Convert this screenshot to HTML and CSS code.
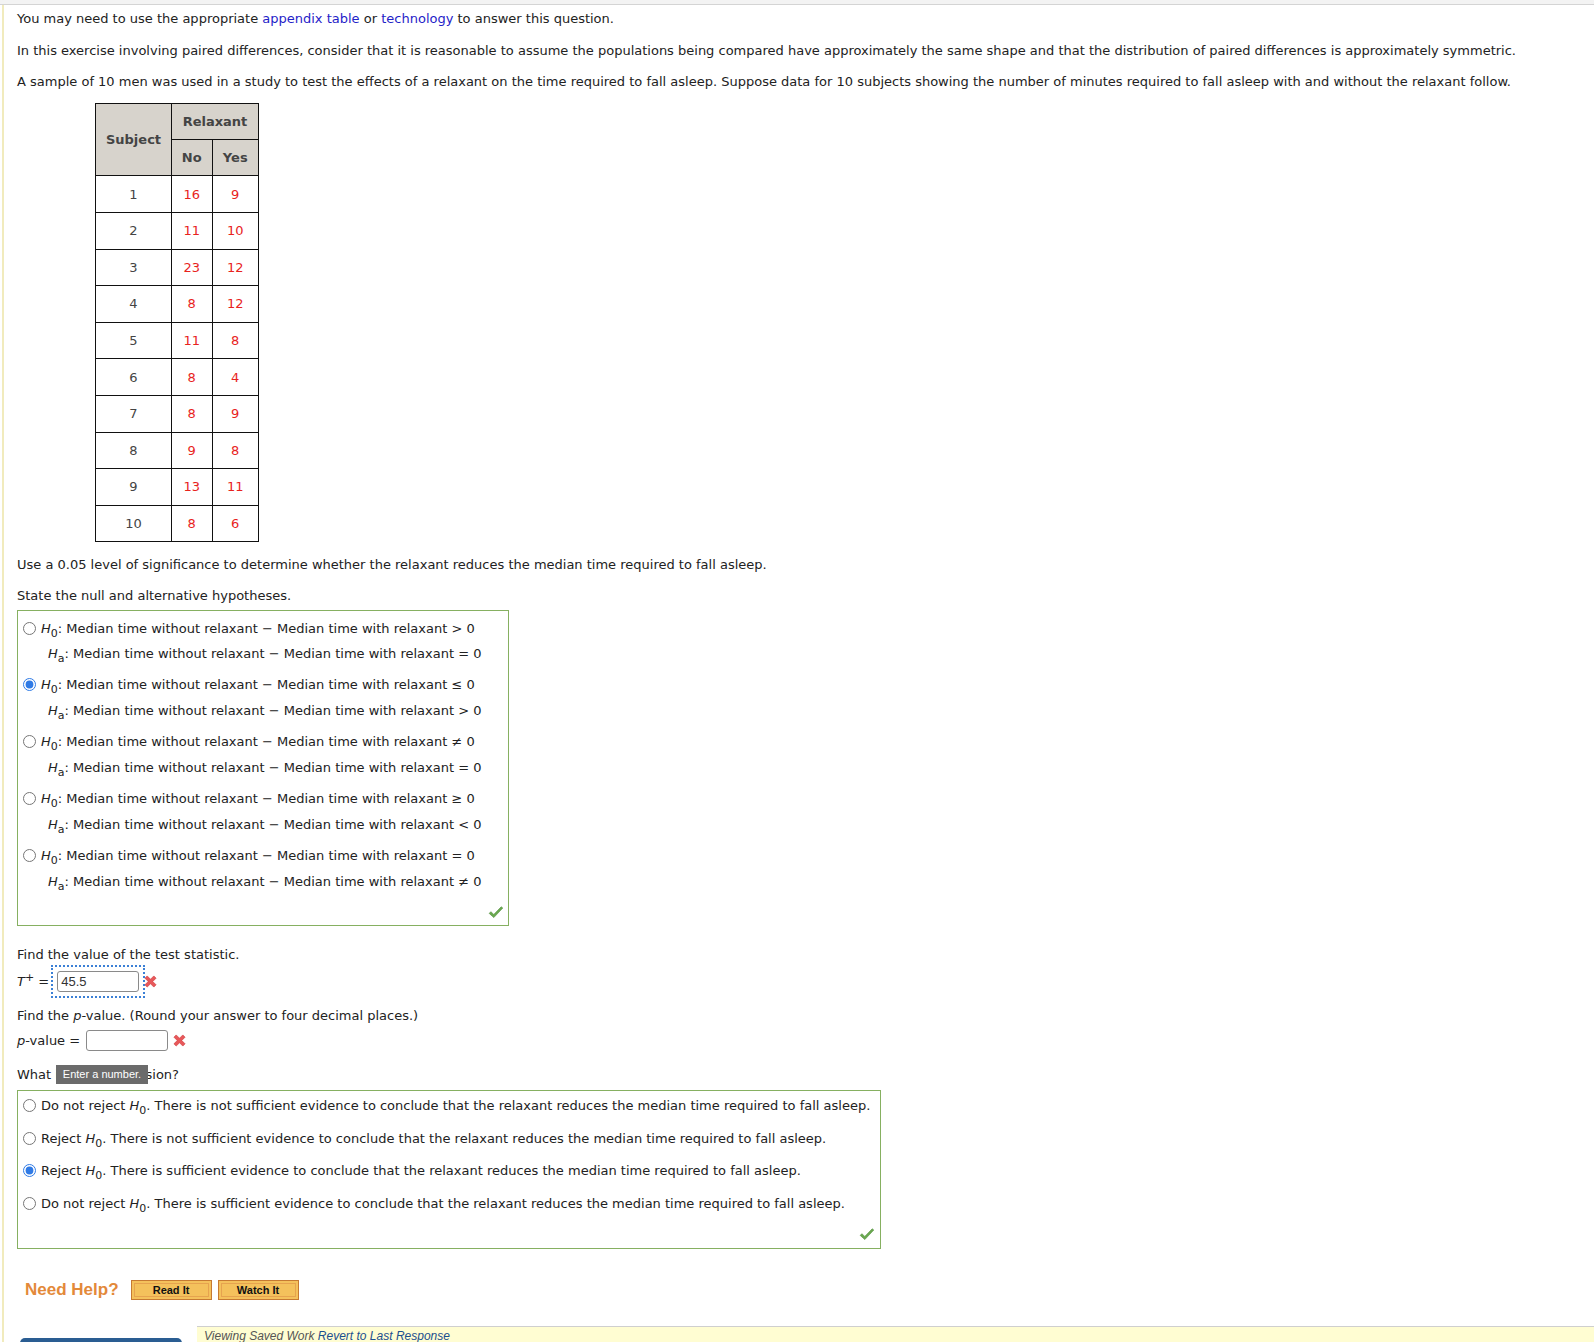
FILE: index.html
```html
<!DOCTYPE html>
<html lang="en">
<head>
<meta charset="utf-8">
<title>Paired differences - relaxant</title>
<link rel="stylesheet" href="styles.css">
</head>
<body>
<div class="topstrip"></div>
<div class="page">
  <div class="content">
    <p class="para">You may need to use the appropriate <a class="link" href="#">appendix table</a> or <a class="link" href="#">technology</a> to answer this question.</p>
    <p class="para">In this exercise involving paired differences, consider that it is reasonable to assume the populations being compared have approximately the same shape and that the distribution of paired differences is approximately symmetric.</p>
    <p class="para para-last">A sample of 10 men was used in a study to test the effects of a relaxant on the time required to fall asleep. Suppose data for 10 subjects showing the number of minutes required to fall asleep with and without the relaxant follow.</p>

    <table class="data">
      <thead>
        <tr><th rowspan="2" class="col-subj">Subject</th><th colspan="2" class="col-group">Relaxant</th></tr>
        <tr><th class="col-no">No</th><th class="col-yes">Yes</th></tr>
      </thead>
      <tbody>
        <tr><td>1</td><td class="val">16</td><td class="val">9</td></tr>
        <tr><td>2</td><td class="val">11</td><td class="val">10</td></tr>
        <tr><td>3</td><td class="val">23</td><td class="val">12</td></tr>
        <tr><td>4</td><td class="val">8</td><td class="val">12</td></tr>
        <tr><td>5</td><td class="val">11</td><td class="val">8</td></tr>
        <tr><td>6</td><td class="val">8</td><td class="val">4</td></tr>
        <tr><td>7</td><td class="val">8</td><td class="val">9</td></tr>
        <tr><td>8</td><td class="val">9</td><td class="val">8</td></tr>
        <tr><td>9</td><td class="val">13</td><td class="val">11</td></tr>
        <tr><td>10</td><td class="val">8</td><td class="val">6</td></tr>
      </tbody>
    </table>

    <p class="para q1">Use a 0.05 level of significance to determine whether the relaxant reduces the median time required to fall asleep.</p>
    <p class="para q2">State the null and alternative hypotheses.</p>

    <div class="answer-box box-hyp">
      <div class="hyp-opt">
        <div class="hyp-line"><input class="radio" type="radio" name="hyp"><span><i>H</i><sub>0</sub>: Median time without relaxant &minus; Median time with relaxant &gt; 0</span></div>
        <div class="hyp-line hyp-alt"><span><i>H</i><sub>a</sub>: Median time without relaxant &minus; Median time with relaxant = 0</span></div>
      </div>
      <div class="hyp-opt">
        <div class="hyp-line"><input class="radio" type="radio" name="hyp" checked><span><i>H</i><sub>0</sub>: Median time without relaxant &minus; Median time with relaxant &le; 0</span></div>
        <div class="hyp-line hyp-alt"><span><i>H</i><sub>a</sub>: Median time without relaxant &minus; Median time with relaxant &gt; 0</span></div>
      </div>
      <div class="hyp-opt">
        <div class="hyp-line"><input class="radio" type="radio" name="hyp"><span><i>H</i><sub>0</sub>: Median time without relaxant &minus; Median time with relaxant &ne; 0</span></div>
        <div class="hyp-line hyp-alt"><span><i>H</i><sub>a</sub>: Median time without relaxant &minus; Median time with relaxant = 0</span></div>
      </div>
      <div class="hyp-opt">
        <div class="hyp-line"><input class="radio" type="radio" name="hyp"><span><i>H</i><sub>0</sub>: Median time without relaxant &minus; Median time with relaxant &ge; 0</span></div>
        <div class="hyp-line hyp-alt"><span><i>H</i><sub>a</sub>: Median time without relaxant &minus; Median time with relaxant &lt; 0</span></div>
      </div>
      <div class="hyp-opt">
        <div class="hyp-line"><input class="radio" type="radio" name="hyp"><span><i>H</i><sub>0</sub>: Median time without relaxant &minus; Median time with relaxant = 0</span></div>
        <div class="hyp-line hyp-alt"><span><i>H</i><sub>a</sub>: Median time without relaxant &minus; Median time with relaxant &ne; 0</span></div>
      </div>
      <div class="status">
        <svg class="check" width="16" height="13" viewBox="0 0 16 13"><path d="M1.2 7.4 L5.8 11.6 L14.8 2 L13.2 0.8 L5.8 8.4 L2.8 5.7 Z" fill="#6aa84f" stroke="#4f8f3a" stroke-width="0.6" stroke-linejoin="round"/></svg>
      </div>
    </div>

    <p class="para q3">Find the value of the test statistic.</p>
    <div class="field-row row-t">
      <span class="lbl"><i class="tvar">T</i><sup>+</sup> =</span>
      <span class="focus-wrap">
        <input class="num-input" type="text" value="45.5">
      </span>
      <svg class="xmark xmark-t" width="15" height="15" viewBox="0 0 14 14"><path d="M1.8 3.9 L3.9 1.8 L7 4.9 L10.1 1.8 L12.2 3.9 L9.1 7 L12.2 10.1 L10.1 12.2 L7 9.1 L3.9 12.2 L1.8 10.1 L4.9 7 Z" fill="#e8585a" stroke="#cf3b3d" stroke-width="0.6" stroke-linejoin="round"/></svg>
    </div>

    <p class="para q4">Find the <i>p</i>-value. (Round your answer to four decimal places.)</p>
    <div class="field-row row-p">
      <span class="lbl"><i>p</i>-value =</span>
      <input class="num-input" type="text" value="">
      <svg class="xmark" width="15" height="15" viewBox="0 0 14 14"><path d="M1.8 3.9 L3.9 1.8 L7 4.9 L10.1 1.8 L12.2 3.9 L9.1 7 L12.2 10.1 L10.1 12.2 L7 9.1 L3.9 12.2 L1.8 10.1 L4.9 7 Z" fill="#e8585a" stroke="#cf3b3d" stroke-width="0.6" stroke-linejoin="round"/></svg>
    </div>

    <p class="para q5"><span class="tip-anchor">What is your conclusion?<span class="tooltip">Enter a number.</span></span></p>

    <div class="answer-box box-concl">
      <div class="concl-opt"><input class="radio" type="radio" name="concl"><span>Do not reject <i>H</i><sub>0</sub>. There is not sufficient evidence to conclude that the relaxant reduces the median time required to fall asleep.</span></div>
      <div class="concl-opt"><input class="radio" type="radio" name="concl"><span>Reject <i>H</i><sub>0</sub>. There is not sufficient evidence to conclude that the relaxant reduces the median time required to fall asleep.</span></div>
      <div class="concl-opt"><input class="radio" type="radio" name="concl" checked><span>Reject <i>H</i><sub>0</sub>. There is sufficient evidence to conclude that the relaxant reduces the median time required to fall asleep.</span></div>
      <div class="concl-opt"><input class="radio" type="radio" name="concl"><span>Do not reject <i>H</i><sub>0</sub>. There is sufficient evidence to conclude that the relaxant reduces the median time required to fall asleep.</span></div>
      <div class="status status-concl">
        <svg class="check" width="16" height="13" viewBox="0 0 16 13"><path d="M1.2 7.4 L5.8 11.6 L14.8 2 L13.2 0.8 L5.8 8.4 L2.8 5.7 Z" fill="#6aa84f" stroke="#4f8f3a" stroke-width="0.6" stroke-linejoin="round"/></svg>
      </div>
    </div>

    <div class="help">
      <span class="help-title">Need Help?</span>
      <button class="help-btn" type="button"><span>Read It</span></button>
      <button class="help-btn" type="button"><span>Watch It</span></button>
    </div>

    <div class="bottom">
      <div class="submit-tab"></div>
      <div class="saved-bar"><i class="saved-note">Viewing Saved Work</i> <a class="saved-link" href="#">Revert to Last Response</a></div>
    </div>
  </div>
</div>
</body>
</html>
```

FILE: styles.css
```css
html, body {
  margin: 0;
  padding: 0;
  background: #ffffff;
  overflow: hidden;
}
body {
  font-family: "DejaVu Sans", Verdana, sans-serif;
  font-size: 13px;
  color: #222222;
  height: 1342px;
}
.topstrip {
  height: 4px;
  background: #f3f3f3;
  border-bottom: 1px solid #d4d4d4;
}
.page {
  margin-left: 2px;
  border-left: 2px solid #f1ebbd;
  height: 1337px;
}
.content {
  padding: 6px 0 0 13px;
}
.para {
  margin: 0 0 15.5px;
  line-height: 16px;
}
.para-last {
  margin-bottom: 13px;
}
.link {
  color: #1f23c8;
  text-decoration: none;
}

/* data table */
.data {
  border-collapse: collapse;
  margin-left: 78px;
  margin-bottom: 15px;
}
.data th, .data td {
  border: 1.5px solid #111111;
  text-align: center;
  padding: 0;
}
.data th {
  background: #d7d3cc;
  color: #444444;
  font-weight: bold;
  font-size: 13px;
  height: 35.2px;
}
.col-subj { width: 75px; }
.col-no { width: 39.5px; }
.col-yes { width: 45.5px; }
.data td {
  height: 35.6px;
  color: #444444;
  font-size: 13px;
}
.data td.val {
  color: #e8231d;
}
.q1 { margin-bottom: 15px; }
.q2 { margin-bottom: 6px; }

/* answer boxes */
.answer-box {
  border: 1px solid #86b061;
  box-sizing: border-box;
}
.box-hyp {
  width: 492px;
  padding: 4px 0 0 3px;
}
.hyp-opt {
  margin-bottom: 6.2px;
}
.hyp-line {
  display: flex;
  align-items: center;
  height: 25.4px;
  white-space: nowrap;
}
.hyp-alt {
  padding-left: 27px;
}
.radio {
  width: 13px;
  height: 13px;
  margin: 0 5px 0 2px;
  accent-color: #2f7ae5;
}
sub {
  font-size: 11px;
  vertical-align: -4px;
  line-height: 0;
}
.status {
  display: flex;
  justify-content: flex-end;
  padding: 0 4px 2px 0;
  height: 17px;
  margin-top: 12px;
}
.check {
  display: block;
}

/* fields */
.q3 { margin-top: 21px; margin-bottom: 0; }
.field-row {
  display: flex;
  align-items: center;
}
.row-t {
  height: 32px;
  margin-top: 3px;
  margin-bottom: 10px;
}
.lbl {
  margin-right: 2px;
}
.tvar {
  font-style: italic;
}
sup {
  font-size: 11px;
  vertical-align: 5px;
  line-height: 0;
}
.focus-wrap {
  display: flex;
  align-items: center;
  border: 2px dotted #3b80d6;
  padding: 4px 4px 4px 4px;
}
.num-input {
  box-sizing: border-box;
  width: 82px;
  height: 21px;
  border: 1px solid #8a8a8a;
  border-radius: 3px;
  font-family: "Liberation Sans", Arial, sans-serif;
  font-size: 13px;
  color: #333333;
  padding: 1px 3px;
  margin: 0;
}
.xmark {
  margin-left: 4px;
  display: block;
}
.xmark-t {
  margin-left: -2px;
}
.q4 { margin-bottom: 0; margin-top: 0; }
.row-p { height: 20px; margin-top: 7px; margin-bottom: 16px; }
.row-p .lbl { margin-right: 6px; }

.q5 { margin-bottom: 7px; }
.tip-anchor {
  position: relative;
}
.tooltip {
  position: absolute;
  left: 39px;
  top: -2px;
  width: 92px;
  height: 19px;
  line-height: 19px;
  background: #6b6b6b;
  color: #ffffff;
  font-family: "Liberation Sans", Arial, sans-serif;
  font-size: 11px;
  text-align: center;
}

.box-concl {
  width: 864px;
  padding: 0 0 0 3px;
}
.concl-opt {
  display: flex;
  align-items: center;
  height: 32.6px;
  white-space: nowrap;
}
.concl-opt:first-child {
  margin-top: -1.5px;
}
.status-concl {
  margin-top: 8px;
  padding-bottom: 3px;
  height: 17px;
  padding-right: 5px;
}

/* help */
.help {
  display: flex;
  align-items: center;
  gap: 6px;
  margin-top: 31px;
  padding-left: 8px;
}
.help-title {
  font-family: "Liberation Sans", Arial, sans-serif;
  font-weight: bold;
  font-size: 17px;
  color: #e3893a;
  margin-right: 6px;
}
.help-btn {
  box-sizing: border-box;
  width: 81px;
  height: 20px;
  border: 1px solid #c67a32;
  background: #f4c15c;
  padding: 2px;
  margin: 0;
  font-family: "Liberation Sans", Arial, sans-serif;
  font-size: 11px;
  font-weight: bold;
  color: #111111;
  cursor: pointer;
}
.help-btn span {
  display: block;
  border: 1px solid #e6a34f;
  line-height: 12px;
}

/* bottom */
.bottom {
  display: flex;
  align-items: flex-start;
  margin-top: 26px;
  margin-left: -13px;
}
.submit-tab {
  width: 162px;
  height: 20px;
  margin-top: 12px;
  margin-left: 16px;
  background: #2a5d92;
  border-radius: 5px 5px 0 0;
}
.saved-bar {
  flex: 1;
  margin-left: 15px;
  height: 30px;
  background: #fffdd2;
  border-top: 1px solid #cfcfcf;
  padding: 2px 0 0 7px;
  font-family: "Liberation Sans", Arial, sans-serif;
  font-size: 12px;
}
.saved-note {
  color: #555555;
}
.saved-link {
  color: #1b4f8e;
  font-style: italic;
  text-decoration: none;
}
```
